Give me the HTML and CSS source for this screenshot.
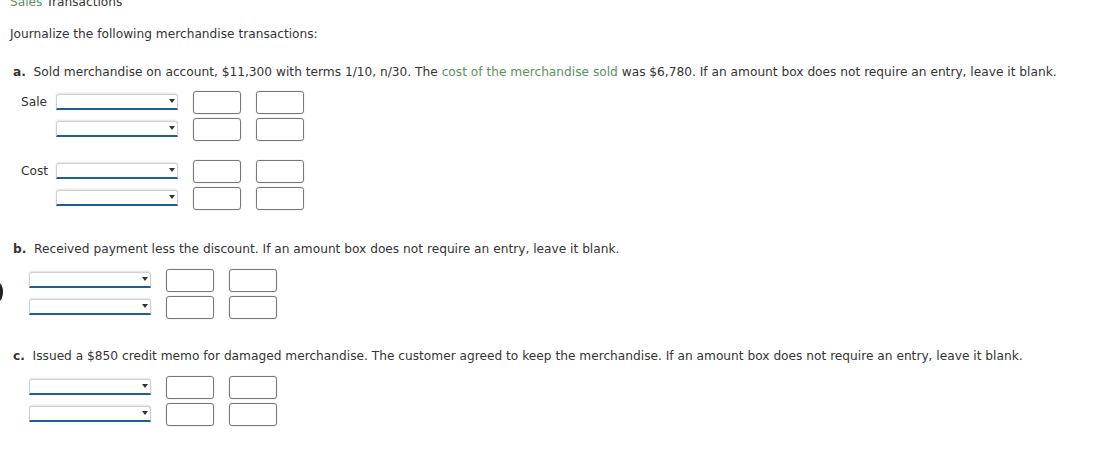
FILE: index.html
```html
<!DOCTYPE html>
<html>
<head>
<meta charset="utf-8">
<link rel="stylesheet" href="styles.css">
</head>
<body>
<div class="page">
  <div class="title"><span class="green">Sales</span> Transactions</div>
  <p class="intro">Journalize the following merchandise transactions:</p>

  <div class="part part-a">
    <p class="question"><b>a.</b>&nbsp; Sold merchandise on account, $11,300 with terms 1/10, n/30. The <span class="green">cost of the merchandise sold</span> was $6,780. If an amount box does not require an entry, leave it blank.</p>
    <div class="group">
      <div class="row"><span class="label">Sale</span><span class="select"><span class="arrow"></span></span><span class="box"></span><span class="box"></span></div>
      <div class="row"><span class="label"></span><span class="select"><span class="arrow"></span></span><span class="box"></span><span class="box"></span></div>
    </div>
    <div class="group">
      <div class="row"><span class="label">Cost</span><span class="select"><span class="arrow"></span></span><span class="box"></span><span class="box"></span></div>
      <div class="row"><span class="label"></span><span class="select"><span class="arrow"></span></span><span class="box"></span><span class="box"></span></div>
    </div>
  </div>

  <div class="part part-b">
    <p class="question"><b>b.</b>&nbsp; Received payment less the discount. If an amount box does not require an entry, leave it blank.</p>
    <div class="group plain">
      <div class="row"><span class="select"><span class="arrow"></span></span><span class="box"></span><span class="box"></span></div>
      <div class="row"><span class="select"><span class="arrow"></span></span><span class="box"></span><span class="box"></span></div>
    </div>
  </div>

  <div class="part part-c">
    <p class="question"><b>c.</b>&nbsp; Issued a $850 credit memo for damaged merchandise. The customer agreed to keep the merchandise. If an amount box does not require an entry, leave it blank.</p>
    <div class="group plain">
      <div class="row"><span class="select"><span class="arrow"></span></span><span class="box"></span><span class="box"></span></div>
      <div class="row"><span class="select"><span class="arrow"></span></span><span class="box"></span><span class="box"></span></div>
    </div>
  </div>
  <span class="edge-dot"></span>
</div>
</body>
</html>
```
FILE: styles.css
```css
html, body {
  margin: 0;
  padding: 0;
  background: #fff;
}
body {
  font-family: "DejaVu Sans", Verdana, sans-serif;
  font-size: 12.2px;
  color: #333;
}
.page {
  position: relative;
  padding: 0 0 0 10px;
  height: 466px;
  overflow: hidden;
}
.green { color: #5a9160; }
.title {
  margin-top: -7px;
  line-height: 18px;
}
.intro {
  margin: 14px 0 0 0;
  line-height: 18px;
}
.question {
  margin: 0;
  line-height: 18px;
  padding-left: 3px;
}
.part-a { margin-top: 20px; }
.part-a .group { padding-left: 11px; margin-top: 10px; }
.part-a .group + .group { margin-top: 20px; }
.part-b { margin-top: 31px; }
.part-c { margin-top: 29px; }
.group.plain { padding-left: 19px; margin-top: 11px; }
.row {
  display: flex;
  align-items: center;
  height: 22px;
  margin-bottom: 5px;
}
.label {
  width: 35px;
  line-height: 18px;
}
.select {
  position: relative;
  box-sizing: border-box;
  width: 122px;
  height: 16px;
  border: 1px solid #d0d0d0;
  border-bottom: 2px solid #1f5f8b;
  border-radius: 3px 3px 0 0;
  box-shadow: 0 -1px 2px rgba(0, 0, 0, 0.12);
  margin-right: 15px;
}
.arrow {
  position: absolute;
  right: 2px;
  top: 4px;
  width: 0;
  height: 0;
  border-left: 3px solid transparent;
  border-right: 3px solid transparent;
  border-top: 4px solid #333;
}
.box {
  box-sizing: border-box;
  width: 48px;
  height: 23px;
  border: 1px solid #777;
  border-radius: 3px;
  box-shadow: 0 0 1px #999;
  margin-right: 15px;
}
.edge-dot {
  position: absolute;
  left: -5px;
  top: 283px;
  width: 8px;
  height: 18px;
  border-radius: 50%;
  background: #222;
}
```
